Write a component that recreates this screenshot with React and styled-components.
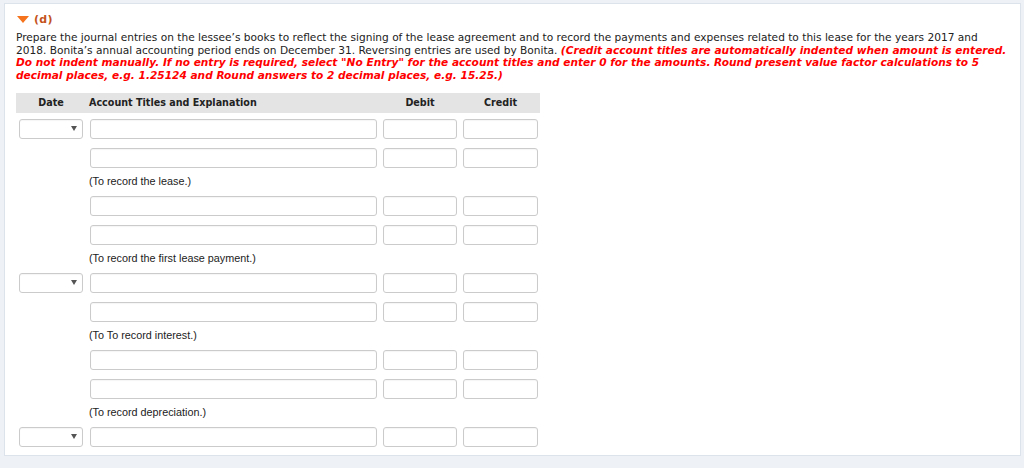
import styled, { createGlobalStyle } from "styled-components";

const GlobalStyle = createGlobalStyle`
    html, body {
        margin: 0;
        padding: 0;
        background: #eef1f5;
    }
    body {
        font-family: "DejaVu Sans", Verdana, sans-serif;
        color: #222;
    }
`;

// each entry: does it start with a date select, how many lines, the note under it
const ENTRIES = [
    { date: true, lines: 2, note: '(To record the lease.)' },
    { date: false, lines: 2, note: '(To record the first lease payment.)' },
    { date: true, lines: 2, note: '(To To record interest.)' },
    { date: false, lines: 2, note: '(To record depreciation.)' },
    { date: true, lines: 1, note: null },
];

function Caret() {
    return (
        <svg width="12" height="7" viewBox="0 0 12 7">
            <path d="M0 0 H12 L6 7 Z" fill="#f5731c" />
        </svg>
    );
}

function DateSelect() {
    return (
        <Select>
            <svg width="6" height="5" viewBox="0 0 6 5">
                <path d="M0 0 H6 L3 5 Z" fill="#555" />
            </svg>
        </Select>
    );
}

function EntryRow({ withDate }) {
    return (
        <Row>
            {withDate ? <DateSelect /> : <span />}
            <Input $first />
            <Input />
            <Input />
        </Row>
    );
}

function App() {
    return (
        <>
            <GlobalStyle />
            <Panel>
                <Heading>
                    <Caret />
                    <Part>(d)</Part>
                </Heading>
                <Instructions>
                    Prepare the journal entries on the lessee’s books to reflect the signing of the lease agreement and to record the payments and expenses related to this lease for the years 2017 and<br />
                    2018. Bonita’s annual accounting period ends on December 31. Reversing entries are used by Bonita.{' '}
                    <Warning>
                        (Credit account titles are automatically indented when amount is entered.<br />
                        Do not indent manually. If no entry is required, select "No Entry" for the account titles and enter 0 for the amounts. Round present value factor calculations to 5<br />
                        decimal places, e.g. 1.25124 and Round answers to 2 decimal places, e.g. 15.25.)
                    </Warning>
                </Instructions>

                <Table>
                    <HeaderRow>
                        <HeadCell $center>Date</HeadCell>
                        <HeadCell>Account Titles and Explanation</HeadCell>
                        <HeadCell $center>Debit</HeadCell>
                        <HeadCell $center>Credit</HeadCell>
                    </HeaderRow>
                    <Body>
                        {ENTRIES.map((entry, i) => (
                            <Entry key={i}>
                                {Array.from({ length: entry.lines }).map((_, j) => (
                                    <EntryRow key={j} withDate={entry.date && j === 0} />
                                ))}
                                {entry.note && <Note>{entry.note}</Note>}
                            </Entry>
                        ))}
                    </Body>
                </Table>
            </Panel>
        </>
    );
}

export default App;

const Panel = styled.div`
    margin: 3px 3px 0 4px;
    height: 442px;
    background: #fff;
    border: 1px solid #dce3eb;
    padding: 9px 11px 0 11px;
    overflow: hidden;
`;

const Heading = styled.div`
    display: flex;
    align-items: center;
    gap: 5px;
    height: 13px;
    margin-left: 1px;
`;

const Part = styled.span`
    color: #c4531c;
    font-weight: bold;
    font-size: 11px;
    letter-spacing: 0.3px;
`;

const Instructions = styled.p`
    margin: 5px 0 0 0;
    font-size: 10.6px;
    line-height: 12.7px;
    color: #222;
    white-space: nowrap;
`;

const Warning = styled.span`
    color: #ff0000;
    font-weight: bold;
    font-style: italic;
`;

const Table = styled.div`
    width: 524px;
    margin-top: 11px;
`;

const Grid = styled.div`
    display: grid;
    grid-template-columns: 64px 288px 74px 75px;
    column-gap: 6px;
    padding: 0 2px 0 3px;
`;

const HeaderRow = styled(Grid)`
    height: 20px;
    align-items: center;
    background: #e4e4e4;
`;

const HeadCell = styled.div`
    font-family: "DejaVu Sans", Verdana, sans-serif;
    font-weight: bold;
    font-size: 9.6px;
    color: #222;
    text-align: ${props => props.$center ? 'center' : 'left'};
`;

const Entry = styled.div`
    display: flex;
    flex-direction: column;
`;

const Row = styled(Grid)`
    height: 20px;
    margin-top: 9px;
`;

const Body = styled.div`
    & > ${Entry}:first-child > ${Row}:first-child {
        margin-top: 6px;
    }
`;

const Input = styled.div`
    box-sizing: border-box;
    height: 20px;
    margin-left: ${props => props.$first ? '1px' : '0'};
    background: #fff;
    border: 1px solid #cbcbcb;
    border-radius: 3px;
    box-shadow: inset 0 1px 1px rgba(0, 0, 0, 0.04);
`;

const Select = styled(Input)`
    display: flex;
    align-items: center;
    justify-content: flex-end;
    padding-right: 5px;
`;

const Note = styled.div`
    font-family: "Liberation Sans", Arial, sans-serif;
    font-size: 10.8px;
    line-height: 18px;
    color: #222;
    margin: 4px 0 -3px 73px;
`;
